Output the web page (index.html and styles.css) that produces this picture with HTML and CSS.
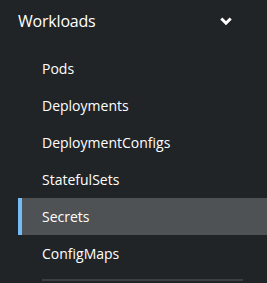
FILE: index.html
```html
<!DOCTYPE html>
<html lang="en">
<head>
    <meta charset="UTF-8">
    <title>Workloads</title>
    <link rel="stylesheet" href="styles.css">
</head>
<body>
    <div class="nav">
        <div class="group-title">
            <span>Workloads</span>
            <svg class="chevron" width="12" height="9" viewBox="0 0 12 9">
                <path d="M1.3 1.5 L6 6.2 L10.7 1.5" fill="none" stroke="#fff" stroke-width="3"/>
            </svg>
        </div>
        <ul class="items">
            <li>Pods</li>
            <li>Deployments</li>
            <li>DeploymentConfigs</li>
            <li>StatefulSets</li>
            <li class="active">Secrets</li>
            <li>ConfigMaps</li>
        </ul>
        <div class="separator"></div>
    </div>
</body>
</html>
```

FILE: styles.css
```css
body {
    margin: 0;
    padding: 0;
    background-color: #212427;
    font-family: "Open Sans", sans-serif;
    color: #fff;
}
.nav {
    width: 267px;
}
.group-title {
    display: flex;
    align-items: center;
    justify-content: space-between;
    height: 42px;
    padding: 0 35px 0 18px;
    font-size: 16px;
}
.group-title span {
    letter-spacing: -0.2px;
}
.chevron {
    display: block;
}
.items {
    list-style: none;
    margin: 8px 0 0 18px;
    padding: 0;
}
.items li {
    height: 37px;
    line-height: 37px;
    padding-left: 24px;
    font-size: 14px;
}
.items li.active {
    background-color: #4f5255;
    border-left: 4px solid #73bcf7;
    padding-left: 20px;
}
.separator {
    height: 2px;
    margin: 7px 24px 0 42px;
    background-color: #3c3f42;
}
```
